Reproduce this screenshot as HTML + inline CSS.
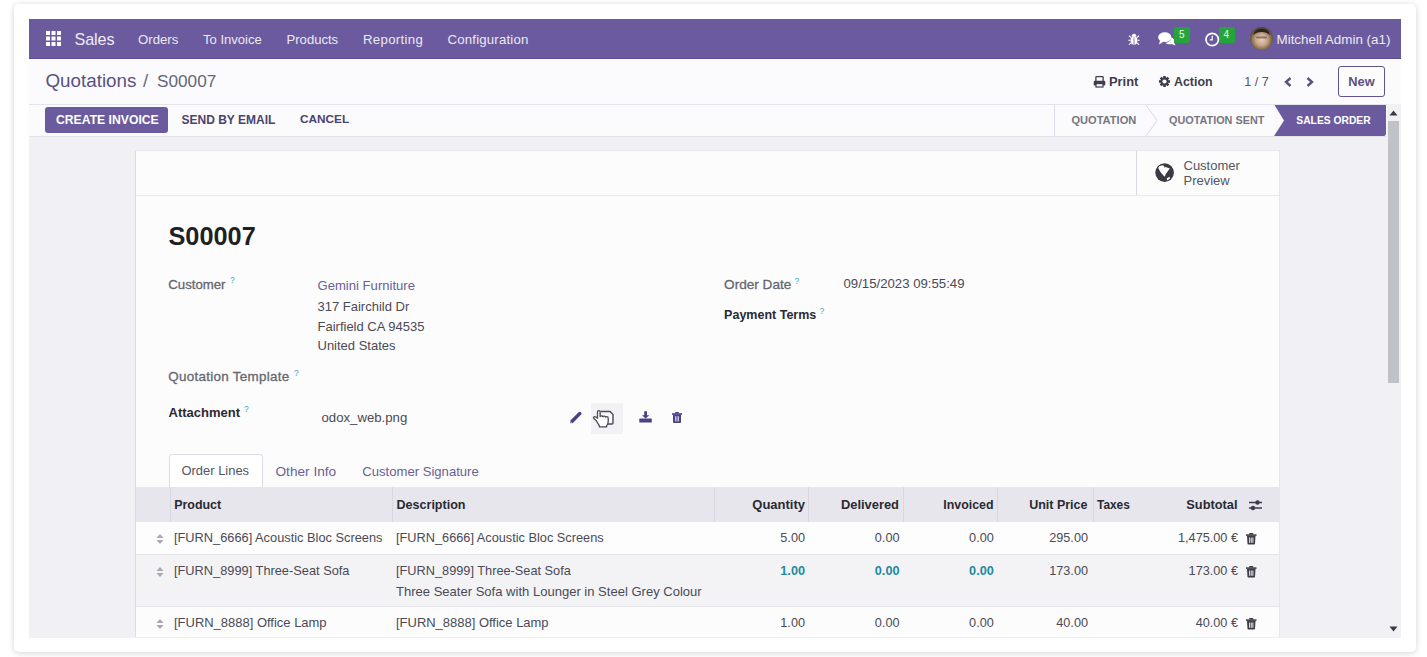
<!DOCTYPE html>
<html><head><meta charset="utf-8"><title>Odoo Sales</title>
<style>
html,body{margin:0;padding:0;width:1427px;height:657px;overflow:hidden;background:#fff;}
body{position:relative;font-family:"Liberation Sans",sans-serif;}
.t{position:absolute;white-space:pre;line-height:1;}
.r{position:absolute;display:block;}
.clip{position:absolute;left:29px;top:19px;width:1372px;height:618px;overflow:hidden;}
</style></head><body>
<div class="r" style="left:14px;top:4px;width:1402px;height:648px;background:#fff;border-radius:5px;box-shadow:0 1px 6px rgba(0,0,0,.18);"></div>
<div class="r" style="left:29px;top:19px;width:1372px;height:618px;background:#fbfbfd;"></div>
<div class="r" style="left:29px;top:19px;width:1372px;height:40px;background:#6b5b9e;"></div>
<div class="r" style="left:29px;top:58px;width:1372px;height:1px;background:#5c4c92;"></div>
<svg class="r" style="left:46px;top:31px;" width="15" height="15" viewBox="0 0 15 15"><rect x="0.0" y="0.0" width="4" height="4" fill="#fff"/><rect x="0.0" y="5.5" width="4" height="4" fill="#fff"/><rect x="0.0" y="11.0" width="4" height="4" fill="#fff"/><rect x="5.5" y="0.0" width="4" height="4" fill="#fff"/><rect x="5.5" y="5.5" width="4" height="4" fill="#fff"/><rect x="5.5" y="11.0" width="4" height="4" fill="#fff"/><rect x="11.0" y="0.0" width="4" height="4" fill="#fff"/><rect x="11.0" y="5.5" width="4" height="4" fill="#fff"/><rect x="11.0" y="11.0" width="4" height="4" fill="#fff"/></svg>
<div class="t" style="left:74.5px;top:31.2px;font-size:16.2px;font-weight:400;color:#eeebf5;letter-spacing:-0.1px;">Sales</div>
<div class="t" style="left:138.0px;top:32.9px;font-size:13.2px;font-weight:400;color:#ecE9f4;letter-spacing:0px;">Orders</div>
<div class="t" style="left:203.0px;top:33.1px;font-size:13.05px;font-weight:400;color:#ecE9f4;letter-spacing:0px;">To Invoice</div>
<div class="t" style="left:286.5px;top:33.0px;font-size:13.1px;font-weight:400;color:#ecE9f4;letter-spacing:0px;">Products</div>
<div class="t" style="left:363.0px;top:32.9px;font-size:13.2px;font-weight:400;color:#ecE9f4;letter-spacing:0.33px;">Reporting</div>
<div class="t" style="left:447.5px;top:32.9px;font-size:13.2px;font-weight:400;color:#ecE9f4;letter-spacing:0.2px;">Configuration</div>
<svg class="r" style="left:1128px;top:33px;" width="12" height="12" viewBox="0 0 12 12"><path d="M3.6 3.6 Q3.8 0.8 6 0.8 Q8.2 0.8 8.4 3.6 Z" fill="#fff"/><ellipse cx="6" cy="7.4" rx="3.4" ry="4.2" fill="#fff"/><path d="M1 2.8 L3.2 4.6 M11 2.8 L8.8 4.6 M0.3 7.2 H2.6 M11.7 7.2 H9.4 M1 11.6 L3 9.8 M11 11.6 L9 9.8" stroke="#fff" stroke-width="1.1"/><rect x="5.6" y="4.6" width="0.8" height="6.4" fill="#6b5b9e"/></svg>
<svg class="r" style="left:1158px;top:32px;" width="18" height="14" viewBox="0 0 18 14"><ellipse cx="6.8" cy="5.2" rx="6.6" ry="4.9" fill="#fff"/><path d="M2 8.5 L1 12.5 L5.5 9.8 Z" fill="#fff"/><path d="M13.5 5.5 Q17.5 7.5 16 10.5 L17.5 13.5 L13.5 12 Q9.5 12.8 7.5 11 Q12.5 10 13.5 5.5 Z" fill="#fff"/></svg>
<div class="r" style="left:1174px;top:26.5px;width:16px;height:16.0px;background:#25a43c;border-radius:2px;"></div>
<div class="t" style="left:1179.0px;top:29.7px;font-size:10px;font-weight:400;color:#eef8ee;">5</div>
<div class="r" style="left:1218.5px;top:26.5px;width:16.0px;height:16.0px;background:#25a43c;border-radius:2px;"></div>
<div class="t" style="left:1223.5px;top:29.7px;font-size:10px;font-weight:400;color:#eef8ee;">4</div>
<svg class="r" style="left:1205px;top:31.5px;" width="15" height="15" viewBox="0 0 15 15"><circle cx="7.2" cy="7.5" r="6.2" fill="none" stroke="#fff" stroke-width="1.7"/><path d="M7.2 3.8 V7.8 H4.8" fill="none" stroke="#fff" stroke-width="1.2"/></svg>
<svg class="r" style="left:1250px;top:27px;" width="23" height="23" viewBox="0 0 23 23"><defs><radialGradient id="av" cx="50%" cy="55%" r="55%"><stop offset="0" stop-color="#e6cdbd"/><stop offset="0.45" stop-color="#c9a68c"/><stop offset="0.75" stop-color="#8a7350"/><stop offset="1" stop-color="#4a3e30"/></radialGradient><clipPath id="avc"><circle cx="11.5" cy="11.5" r="11.5"/></clipPath></defs><g clip-path="url(#avc)"><rect width="23" height="23" fill="url(#av)"/><path d="M3 8 Q5 1 12 1.5 Q19 1.5 20 8 Q16 4.5 11.5 5 Q6.5 5 3 8 Z" fill="#2d2620"/><rect x="6" y="9.5" width="11" height="2" rx="1" fill="#5a4a40" opacity="0.6"/></g></svg>
<div class="t" style="left:1276.5px;top:32.5px;font-size:13.4px;font-weight:400;color:#ecE9f4;">Mitchell Admin (a1)</div>
<div class="r" style="left:29px;top:104px;width:1372px;height:1px;background:#e3e3ea;"></div>
<div class="t" style="left:45.5px;top:72.3px;font-size:18.8px;font-weight:400;color:#5a5180;">Quotations</div>
<div class="t" style="left:143.0px;top:72.3px;font-size:18.8px;font-weight:400;color:#6c6c80;">/</div>
<div class="t" style="left:157.0px;top:73.4px;font-size:17.2px;font-weight:400;color:#666677;">S00007</div>
<svg class="r" style="left:1093px;top:75px;" width="13" height="13" viewBox="0 0 13 13"><rect x="2.9" y="1.6" width="7.2" height="5" rx="0.6" fill="none" stroke="#3d3d4d" stroke-width="1.3"/><rect x="0.7" y="5.8" width="11.6" height="4.6" rx="1.2" fill="#3d3d4d"/><rect x="3" y="8.6" width="7" height="3.4" fill="#fcfcfd" stroke="#3d3d4d" stroke-width="1.2"/></svg>
<div class="t" style="left:1109.0px;top:75.7px;font-size:12.9px;font-weight:700;color:#3d3d4d;">Print</div>
<svg class="r" style="left:1159px;top:76px;" width="11" height="11" viewBox="0 0 11 11"><g transform="translate(5.5 5.5)" fill="#3d3d4d"><rect x="-1.3" y="-5.5" width="2.6" height="3" transform="rotate(0)"/><rect x="-1.3" y="-5.5" width="2.6" height="3" transform="rotate(45)"/><rect x="-1.3" y="-5.5" width="2.6" height="3" transform="rotate(90)"/><rect x="-1.3" y="-5.5" width="2.6" height="3" transform="rotate(135)"/><rect x="-1.3" y="-5.5" width="2.6" height="3" transform="rotate(180)"/><rect x="-1.3" y="-5.5" width="2.6" height="3" transform="rotate(225)"/><rect x="-1.3" y="-5.5" width="2.6" height="3" transform="rotate(270)"/><rect x="-1.3" y="-5.5" width="2.6" height="3" transform="rotate(315)"/><circle r="3.9"/></g><circle cx="5.5" cy="5.5" r="2.1" fill="#fcfcfd"/></svg>
<div class="t" style="left:1174.0px;top:76.1px;font-size:12.4px;font-weight:700;color:#3d3d4d;">Action</div>
<div class="t" style="left:1244.2px;top:76.3px;font-size:12.6px;font-weight:400;color:#555566;">1 / 7</div>
<svg class="r" style="left:1284px;top:77px;" width="8" height="10" viewBox="0 0 8 10"><path d="M6.5 1 L2 5 L6.5 9" fill="none" stroke="#5a5180" stroke-width="2.4"/></svg>
<svg class="r" style="left:1305.5px;top:77px;" width="8" height="10" viewBox="0 0 8 10"><path d="M1.5 1 L6 5 L1.5 9" fill="none" stroke="#5a5180" stroke-width="2.4"/></svg>
<div class="r" style="left:1338px;top:66px;width:47px;height:31px;border:1px solid #5f5392;border-radius:3px;box-sizing:border-box;background:#fcfcfd;"></div>
<div class="t" style="left:1348.3px;top:76.2px;font-size:12.8px;font-weight:700;color:#5a5180;">New</div>
<div class="r" style="left:29px;top:137px;width:1372px;height:501px;background:#f1f1f5;"></div>
<div class="r" style="left:29px;top:136px;width:1358px;height:1px;background:#e2e2e9;"></div>
<div class="r" style="left:45px;top:107px;width:123px;height:26px;background:#6b5b9e;border-radius:3px;"></div>
<div class="t" style="left:56.0px;top:113.9px;font-size:12.2px;font-weight:700;color:#fff;">CREATE INVOICE</div>
<div class="t" style="left:181.5px;top:113.9px;font-size:12px;font-weight:700;color:#4a4470;">SEND BY EMAIL</div>
<div class="t" style="left:300.0px;top:114.1px;font-size:11.8px;font-weight:700;color:#4a4470;">CANCEL</div>
<div class="r" style="left:1054px;top:105px;width:1px;height:31px;background:#dcdce8;"></div>
<div class="t" style="left:1071.4px;top:114.9px;font-size:11.1px;font-weight:700;color:#76767f;">QUOTATION</div>
<svg class="r" style="left:1145px;top:105px;" width="14" height="31" viewBox="0 0 14 31"><path d="M1 0 L12 15.5 L1 31" fill="none" stroke="#d8d8e4" stroke-width="1"/></svg>
<div class="t" style="left:1169.0px;top:115.1px;font-size:10.85px;font-weight:700;color:#76767f;">QUOTATION SENT</div>
<svg class="r" style="left:1274px;top:105px;" width="112" height="31" viewBox="0 0 112 31"><path d="M0.5 0 H112 V28.5 Q112 31 109.5 31 H0 L10 15.5 Z" fill="#6b5b9e"/></svg>
<div class="t" style="left:1296.3px;top:116.4px;font-size:10.3px;font-weight:700;color:#fff;">SALES ORDER</div>
<div class="r" style="left:1387px;top:104px;width:14px;height:533px;background:#f1f1f4;"></div>
<div class="r" style="left:1388px;top:121px;width:11px;height:262px;background:#c1c1c8;"></div>
<svg class="r" style="left:1389px;top:110px;" width="9" height="6" viewBox="0 0 9 6"><path d="M0.5 5.5 L4.5 0.5 L8.5 5.5 Z" fill="#3a3a44"/></svg>
<svg class="r" style="left:1389px;top:626px;" width="9" height="6" viewBox="0 0 9 6"><path d="M0.5 0.5 L4.5 5.5 L8.5 0.5 Z" fill="#3a3a44"/></svg>
<div class="r" style="left:135px;top:151px;width:1145px;height:486px;background:#fcfcfd;border-left:1px solid #dcdce4;border-right:1px solid #e6e6ee;box-sizing:border-box;"></div>
<div class="r" style="left:135px;top:150px;width:1145px;height:1px;background:#e8e8f0;"></div>
<div class="r" style="left:136px;top:195px;width:1143px;height:1px;background:#e8e8ef;"></div>
<div class="r" style="left:1136px;top:151px;width:1px;height:44px;background:#d8d8e0;"></div>
<svg class="r" style="left:1155px;top:162.5px;" width="19.5" height="19.5" viewBox="0 0 19.5 19.5"><circle cx="9.6" cy="9.6" r="9.3" fill="#3a3a44"/><path d="M3.2 5 Q3.8 2.8 6.5 2.6 L8.8 2.6 L9.4 4.6 L10.6 4 L14.8 5.6 L12.6 8.6 L11 10.8 L9.6 13.8 L8.4 12.6 Q4.8 8.6 3.2 5 Z" fill="#fff"/><path d="M11.6 15.6 L14.4 13.8 L15.2 15.2 L12.4 17.6 Z" fill="#fff"/></svg>
<div class="t" style="left:1183.5px;top:159.3px;font-size:13px;font-weight:400;color:#555560;">Customer</div>
<div class="t" style="left:1183.5px;top:173.8px;font-size:13px;font-weight:400;color:#555560;">Preview</div>
<div class="t" style="left:168.5px;top:223.5px;font-size:25.3px;font-weight:700;color:#1f1f24;">S00007</div>
<div class="t" style="left:168.3px;top:278.0px;font-size:13.2px;font-weight:400;color:#66666e;-webkit-text-stroke:0.3px #66666e;">Customer</div>
<div class="t" style="left:230.0px;top:276.3px;font-size:8.5px;font-weight:400;color:#3aa6c6;">?</div>
<div class="t" style="left:317.5px;top:278.8px;font-size:13.1px;font-weight:400;color:#6a5e96;">Gemini Furniture</div>
<div class="t" style="left:317.5px;top:300.0px;font-size:13px;font-weight:400;color:#4a4a55;">317 Fairchild Dr</div>
<div class="t" style="left:317.5px;top:319.5px;font-size:13px;font-weight:400;color:#4a4a55;">Fairfield CA 94535</div>
<div class="t" style="left:317.5px;top:338.7px;font-size:13px;font-weight:400;color:#4a4a55;">United States</div>
<div class="t" style="left:168.3px;top:370.0px;font-size:13.4px;font-weight:400;color:#66666e;-webkit-text-stroke:0.3px #66666e;letter-spacing:0.3px;">Quotation Template</div>
<div class="t" style="left:294.0px;top:368.8px;font-size:8.5px;font-weight:400;color:#3aa6c6;">?</div>
<div class="t" style="left:168.5px;top:405.6px;font-size:13px;font-weight:700;color:#2a2a33;">Attachment</div>
<div class="t" style="left:244.0px;top:404.8px;font-size:8.5px;font-weight:400;color:#3aa6c6;">?</div>
<div class="t" style="left:321.5px;top:410.5px;font-size:13.2px;font-weight:400;color:#4a4a55;">odox_web.png</div>
<svg class="r" style="left:568px;top:410px;" width="16" height="15" viewBox="0 0 16 15"><path d="M2.2 13.2 L2.4 10.6 L10.6 2.2 Q11.8 1.1 13 2.2 Q14.2 3.4 13.1 4.6 L4.9 12.9 Z" fill="#4e4086"/><path d="M2.6 12.6 L2.7 11.2 L4 12.5 Z" fill="#f4f4fa"/></svg>
<div class="r" style="left:591px;top:403px;width:32px;height:31px;background:#f1f1f6;"></div>
<svg class="r" style="left:592px;top:409px;" width="23" height="19" viewBox="0 0 23 19"><path d="M8.5 2.5 H18 L21 5.5 V14 Q21 15 20 15 H14" fill="#f8f8fc" stroke="#4a4a58" stroke-width="1.4"/><path d="M4.5 12 L2.2 9.8 Q1 8.8 1.8 8 Q2.6 7.2 3.8 8 L5.5 9.3 V3 Q5.5 1.6 6.8 1.6 Q8.1 1.6 8.1 3 V7.6 Q8.4 6.8 9.5 6.8 Q10.6 6.8 10.9 7.8 Q11.2 7.1 12.2 7.1 Q13.3 7.1 13.6 8.2 Q14 7.6 14.8 7.6 Q16.2 7.6 16.2 9.2 V12.4 Q16.2 14.8 14.6 16.6 V17.8 H7.4 V16.8 Z" fill="#fff" stroke="#4a4a58" stroke-width="1.3" stroke-linejoin="round"/></svg>
<svg class="r" style="left:638.5px;top:410.5px;" width="13" height="12" viewBox="0 0 13 12"><path d="M5.2 0.3 H8 V4.3 H10.3 L6.6 7.6 L2.9 4.3 H5.2 Z" fill="#4e4086"/><rect x="0.3" y="7.6" width="12.5" height="3.9" rx="0.6" fill="#4e4086"/></svg>
<svg class="r" style="left:671.5px;top:412px;" width="10" height="11" viewBox="0 0 10 11"><rect x="0" y="1.2" width="10" height="1.6" fill="#4e4086"/><rect x="3.2" y="0" width="3.6" height="1.4" fill="#4e4086"/><path d="M1 2.6 H9 V10 Q9 11 8 11 H2 Q1 11 1 10 Z" fill="#4e4086"/><path d="M3.5 4.2 V9.4 M5 4.2 V9.4 M6.5 4.2 V9.4" stroke="#e8e6f4" stroke-width="0.8"/></svg>
<div class="t" style="left:724.1px;top:277.8px;font-size:13.6px;font-weight:400;color:#66666e;-webkit-text-stroke:0.3px #66666e;">Order Date</div>
<div class="t" style="left:794.6px;top:276.6px;font-size:8.5px;font-weight:400;color:#3aa6c6;">?</div>
<div class="t" style="left:843.5px;top:277.4px;font-size:13.2px;font-weight:400;color:#4a4a55;">09/15/2023 09:55:49</div>
<div class="t" style="left:724.1px;top:308.7px;font-size:12.5px;font-weight:700;color:#2a2a33;">Payment Terms</div>
<div class="t" style="left:819.6px;top:306.8px;font-size:8.5px;font-weight:400;color:#3aa6c6;">?</div>
<div class="r" style="left:169px;top:454px;width:94px;height:34px;background:#fff;border:1px solid #dcdce4;border-bottom:none;border-radius:3px 3px 0 0;box-sizing:border-box;"></div>
<div class="t" style="left:181.5px;top:465.3px;font-size:12.95px;font-weight:400;color:#555560;">Order Lines</div>
<div class="t" style="left:275.5px;top:464.7px;font-size:13.65px;font-weight:400;color:#6a5e96;">Other Info</div>
<div class="t" style="left:362.3px;top:465.2px;font-size:13.1px;font-weight:400;color:#6a5e96;">Customer Signature</div>
<div class="r" style="left:136px;top:487px;width:1143px;height:35px;background:#e6e6ec;"></div>
<div class="r" style="left:170px;top:487px;width:1px;height:35px;background:#d8d8e2;"></div>
<div class="r" style="left:392px;top:487px;width:1px;height:35px;background:#d8d8e2;"></div>
<div class="r" style="left:714px;top:487px;width:1px;height:35px;background:#d8d8e2;"></div>
<div class="r" style="left:808px;top:487px;width:1px;height:35px;background:#d8d8e2;"></div>
<div class="r" style="left:903px;top:487px;width:1px;height:35px;background:#d8d8e2;"></div>
<div class="r" style="left:997px;top:487px;width:1px;height:35px;background:#d8d8e2;"></div>
<div class="r" style="left:1093px;top:487px;width:1px;height:35px;background:#d8d8e2;"></div>
<div class="t" style="left:174.2px;top:499.4px;font-size:12.45px;font-weight:700;color:#2a2a33;">Product</div>
<div class="t" style="left:396.5px;top:499.3px;font-size:12.55px;font-weight:700;color:#2a2a33;">Description</div>
<div class="t" style="right:622.0px;top:498.4px;font-size:13px;font-weight:700;color:#2a2a33;">Quantity</div>
<div class="t" style="right:528.0px;top:498.5px;font-size:12.9px;font-weight:700;color:#2a2a33;">Delivered</div>
<div class="t" style="right:433.5px;top:498.9px;font-size:12.4px;font-weight:700;color:#2a2a33;">Invoiced</div>
<div class="t" style="right:339.5px;top:498.8px;font-size:12.5px;font-weight:700;color:#2a2a33;">Unit Price</div>
<div class="t" style="left:1097.0px;top:500.1px;font-size:11.9px;font-weight:700;color:#2a2a33;">Taxes</div>
<div class="t" style="right:189.5px;top:498.6px;font-size:12.8px;font-weight:700;color:#2a2a33;">Subtotal</div>
<svg class="r" style="left:1249px;top:500px;" width="13" height="11" viewBox="0 0 13 11"><path d="M0 2.5 H13 M0 8 H13" stroke="#3d3d48" stroke-width="1.3"/><circle cx="8.5" cy="2.5" r="2.2" fill="#3d3d48"/><circle cx="4" cy="8" r="2.2" fill="#3d3d48"/></svg>
<div class="r" style="left:136px;top:522px;width:1143px;height:33px;background:#fdfdfd;"></div>
<div class="r" style="left:136px;top:554px;width:1143px;height:1px;background:#e4e4ea;"></div>
<div class="r" style="left:136px;top:555px;width:1143px;height:52px;background:#f3f3f6;"></div>
<div class="r" style="left:136px;top:606px;width:1143px;height:1px;background:#e4e4ea;"></div>
<div class="r" style="left:136px;top:607px;width:1143px;height:30px;background:#fcfcfd;"></div>
<svg class="r" style="left:155.5px;top:534px;" width="8" height="10" viewBox="0 0 8 10"><path d="M4 0 L7.5 4 H0.5 Z M4 10 L7.5 6 H0.5 Z" fill="#a8a8b4"/></svg>
<div class="t" style="left:174.0px;top:531.9px;font-size:12.8px;font-weight:400;color:#4a4a55;">[FURN_6666] Acoustic Bloc Screens</div>
<div class="t" style="left:396.0px;top:531.9px;font-size:12.75px;font-weight:400;color:#4a4a55;">[FURN_6666] Acoustic Bloc Screens</div>
<div class="t" style="right:622.0px;top:531.9px;font-size:12.7px;font-weight:400;color:#4a4a55;">5.00</div>
<div class="t" style="right:527.5px;top:531.9px;font-size:12.7px;font-weight:400;color:#4a4a55;">0.00</div>
<div class="t" style="right:433.2px;top:531.9px;font-size:12.7px;font-weight:400;color:#4a4a55;">0.00</div>
<div class="t" style="right:339.0px;top:531.9px;font-size:12.7px;font-weight:400;color:#4a4a55;">295.00</div>
<div class="t" style="right:189.0px;top:531.9px;font-size:12.7px;font-weight:400;color:#4a4a55;">1,475.00 €</div>
<svg class="r" style="left:1246px;top:533px;" width="10.5" height="11.5" viewBox="0 0 10.5 11.5"><rect x="0" y="1.3" width="10.5" height="1.6" fill="#3d3d48"/><rect x="3.3" y="0" width="3.9" height="1.5" fill="#3d3d48"/><path d="M1 3 H9.5 L9 10.8 Q9 11.5 8.2 11.5 H2.3 Q1.5 11.5 1.5 10.8 Z" fill="#3d3d48"/><path d="M3.6 4.5 V9.8 M5.25 4.5 V9.8 M6.9 4.5 V9.8" stroke="#fcfcfd" stroke-width="0.9"/></svg>
<svg class="r" style="left:155.5px;top:567px;" width="8" height="10" viewBox="0 0 8 10"><path d="M4 0 L7.5 4 H0.5 Z M4 10 L7.5 6 H0.5 Z" fill="#a8a8b4"/></svg>
<div class="t" style="left:174.0px;top:564.8px;font-size:12.8px;font-weight:400;color:#4a4a55;">[FURN_8999] Three-Seat Sofa</div>
<div class="t" style="left:396.0px;top:564.8px;font-size:12.75px;font-weight:400;color:#4a4a55;">[FURN_8999] Three-Seat Sofa</div>
<div class="t" style="left:396.0px;top:584.6px;font-size:13.04px;font-weight:400;color:#4a4a55;">Three Seater Sofa with Lounger in Steel Grey Colour</div>
<div class="t" style="right:622.0px;top:564.8px;font-size:12.7px;font-weight:700;color:#1e8aa0;">1.00</div>
<div class="t" style="right:527.5px;top:564.8px;font-size:12.7px;font-weight:700;color:#1e8aa0;">0.00</div>
<div class="t" style="right:433.2px;top:564.8px;font-size:12.7px;font-weight:700;color:#1e8aa0;">0.00</div>
<div class="t" style="right:339.0px;top:564.8px;font-size:12.7px;font-weight:400;color:#4a4a55;">173.00</div>
<div class="t" style="right:189.0px;top:564.8px;font-size:12.7px;font-weight:400;color:#4a4a55;">173.00 €</div>
<svg class="r" style="left:1246px;top:566px;" width="10.5" height="11.5" viewBox="0 0 10.5 11.5"><rect x="0" y="1.3" width="10.5" height="1.6" fill="#3d3d48"/><rect x="3.3" y="0" width="3.9" height="1.5" fill="#3d3d48"/><path d="M1 3 H9.5 L9 10.8 Q9 11.5 8.2 11.5 H2.3 Q1.5 11.5 1.5 10.8 Z" fill="#3d3d48"/><path d="M3.6 4.5 V9.8 M5.25 4.5 V9.8 M6.9 4.5 V9.8" stroke="#fcfcfd" stroke-width="0.9"/></svg>
<svg class="r" style="left:155.5px;top:619px;" width="8" height="10" viewBox="0 0 8 10"><path d="M4 0 L7.5 4 H0.5 Z M4 10 L7.5 6 H0.5 Z" fill="#a8a8b4"/></svg>
<div class="t" style="left:174.0px;top:616.6px;font-size:12.97px;font-weight:400;color:#4a4a55;">[FURN_8888] Office Lamp</div>
<div class="t" style="left:396.0px;top:616.6px;font-size:12.97px;font-weight:400;color:#4a4a55;">[FURN_8888] Office Lamp</div>
<div class="t" style="right:622.0px;top:616.8px;font-size:12.7px;font-weight:400;color:#4a4a55;">1.00</div>
<div class="t" style="right:527.5px;top:616.8px;font-size:12.7px;font-weight:400;color:#4a4a55;">0.00</div>
<div class="t" style="right:433.2px;top:616.8px;font-size:12.7px;font-weight:400;color:#4a4a55;">0.00</div>
<div class="t" style="right:339.0px;top:616.8px;font-size:12.7px;font-weight:400;color:#4a4a55;">40.00</div>
<div class="t" style="right:189.0px;top:616.8px;font-size:12.7px;font-weight:400;color:#4a4a55;">40.00 €</div>
<svg class="r" style="left:1246px;top:618px;" width="10.5" height="11.5" viewBox="0 0 10.5 11.5"><rect x="0" y="1.3" width="10.5" height="1.6" fill="#3d3d48"/><rect x="3.3" y="0" width="3.9" height="1.5" fill="#3d3d48"/><path d="M1 3 H9.5 L9 10.8 Q9 11.5 8.2 11.5 H2.3 Q1.5 11.5 1.5 10.8 Z" fill="#3d3d48"/><path d="M3.6 4.5 V9.8 M5.25 4.5 V9.8 M6.9 4.5 V9.8" stroke="#fcfcfd" stroke-width="0.9"/></svg>
</body></html>
